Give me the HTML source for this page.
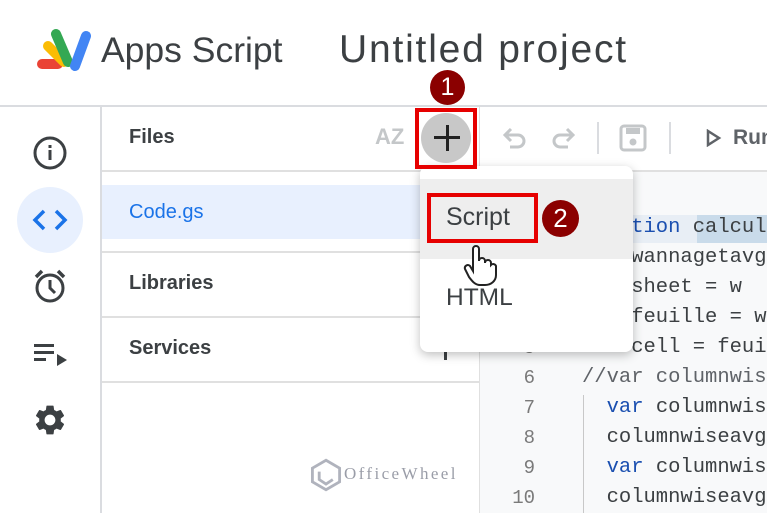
<!DOCTYPE html>
<html><head><meta charset="utf-8"><style>
*{margin:0;padding:0;box-sizing:border-box}
body{width:767px;height:513px;overflow:hidden;background:#fff;font-family:"Liberation Sans",sans-serif;position:relative;color:#3c4043}
.a{position:absolute}
.code{font-family:"Liberation Mono",monospace;font-size:20.5px;color:#3c4043;white-space:pre;line-height:30px}
.ln{font-family:"Liberation Mono",monospace;font-size:19px;color:#7a7a7a;width:40px;text-align:right;line-height:30px}
.kw{color:#1a4fb0}
.cm{color:#5f6368}
.ftxt{font-size:20px;color:#3c4043}
</style></head><body>
<svg class="a" style="left:34px;top:28px" width="58" height="46" viewBox="0 0 58 46">
<g stroke-linecap="round" stroke-width="10" fill="none">
<line x1="8" y1="36" x2="24" y2="36" stroke="#ea4335"/>
<line x1="14" y1="18" x2="30" y2="34" stroke="#fbbc04"/>
<line x1="22" y1="6" x2="34" y2="34" stroke="#34a853"/>
<line x1="52" y1="8" x2="41" y2="38" stroke="#4285f4"/>
</g></svg>
<div class="a" style="left:101px;top:30px;font-size:35.5px;color:#3c4043">Apps Script</div>
<div class="a" style="left:339px;top:28px;font-size:39px;letter-spacing:1.8px;color:#3c4043">Untitled project</div>
<div class="a" style="left:0;top:105px;width:767px;height:2px;background:#dadce0"></div>
<div class="a" style="left:100px;top:107px;width:2px;height:406px;background:#dadce0"></div>
<svg class="a" style="left:32px;top:135px" width="36" height="36" viewBox="0 0 36 36"><circle cx="18" cy="18" r="15" fill="none" stroke="#3c4043" stroke-width="3"/><rect x="16.5" y="15" width="3" height="10" fill="#3c4043"/><rect x="16.5" y="10" width="3" height="3" fill="#3c4043"/></svg>
<div class="a" style="left:17px;top:187px;width:66px;height:66px;border-radius:50%;background:#e8f0fe"></div>
<svg class="a" style="left:32px;top:208px" width="36" height="24" viewBox="0 0 36 24"><path d="M12 3 L3 12 L12 21 M24 3 L33 12 L24 21" fill="none" stroke="#1a73e8" stroke-width="3.5"/></svg>
<svg class="a" style="left:32px;top:268px" width="36" height="36" viewBox="0 0 36 36"><circle cx="18" cy="20" r="13" fill="none" stroke="#3c4043" stroke-width="3"/><path d="M18 12 V20 L23 25" fill="none" stroke="#3c4043" stroke-width="3"/><path d="M4 9 L10 3 M32 9 L26 3" stroke="#3c4043" stroke-width="3.5"/></svg>
<svg class="a" style="left:34px;top:342px" width="36" height="28" viewBox="0 0 36 28"><rect x="0" y="2" width="20" height="3" fill="#3c4043"/><rect x="0" y="9" width="20" height="3" fill="#3c4043"/><rect x="0" y="16" width="12" height="3" fill="#3c4043"/><path d="M23 12 L33 18 L23 24Z" fill="#3c4043"/></svg>
<svg class="a" style="left:32px;top:402px" width="36" height="36" viewBox="0 0 24 24"><path fill="#3c4043" d="M19.14 12.94c.04-.3.06-.61.06-.94 0-.32-.02-.64-.07-.94l2.030-1.580a.49.49 0 0 0 .12-.61l-1.920-3.320a.49.49 0 0 0-.59-.22l-2.390.96c-.5-.38-1.030-.7-1.620-.94l-.36-2.540a.48.48 0 0 0-.48-.41h-3.840c-.24 0-.43.17-.47.41l-.36 2.540c-.59.24-1.130.57-1.620.94l-2.390-.96a.49.49 0 0 0-.59.22L2.740 8.870c-.12.21-.08.47.12.61l2.030 1.580c-.05.3-.09.63-.09.94s.02.64.07.94l-2.030 1.580a.49.49 0 0 0-.12.61l1.920 3.320c.12.22.37.29.59.22l2.390-.96c.5.38 1.030.7 1.620.94l.36 2.540c.05.24.24.41.48.41h3.840c.24 0 .44-.17.47-.41l.36-2.540c.59-.24 1.130-.56 1.620-.94l2.390.96c.22.08.47 0 .59-.22l1.920-3.320c.12-.22.07-.47-.12-.61l-2.010-1.580zM12 15.6c-1.980 0-3.600-1.620-3.600-3.600s1.620-3.600 3.600-3.600 3.600 1.620 3.600 3.600-1.620 3.600-3.600 3.600z"/><circle cx="12" cy="12" r="2.6" fill="#fff"/></svg>
<div class="a ftxt" style="left:129px;top:126px;font-weight:bold;color:#3c4043">Files</div>
<div class="a" style="left:375px;top:124px;font-size:22px;font-weight:bold;color:#c4c7c9">AZ</div>
<div class="a" style="left:102px;top:170px;width:377px;height:2px;background:#e0e0e0"></div>
<div class="a" style="left:102px;top:185px;width:377px;height:54px;background:#e8f0fe"></div>
<div class="a ftxt" style="left:129px;top:201px;color:#1a73e8">Code.gs</div>
<div class="a" style="left:102px;top:251px;width:377px;height:2px;background:#e0e0e0"></div>
<div class="a ftxt" style="left:129px;top:272px;font-weight:bold">Libraries</div>
<div class="a" style="left:102px;top:316px;width:377px;height:2px;background:#e0e0e0"></div>
<div class="a ftxt" style="left:129px;top:337px;font-weight:bold">Services</div>
<div class="a" style="left:444px;top:344px;width:3px;height:16px;background:#3c4043"></div>
<div class="a" style="left:102px;top:381px;width:377px;height:2px;background:#e0e0e0"></div>
<svg class="a" style="left:310px;top:458px" width="32" height="34" viewBox="0 0 28 30"><path d="M14 2 L26 9 V21 L14 28 L2 21 V9Z M8 12 V19 L14 23 L20 19" fill="none" stroke="#b0b3bd" stroke-width="2.5"/></svg>
<div class="a" style="left:344px;top:464px;font-family:'Liberation Serif',serif;font-size:17px;letter-spacing:2.4px;color:#9a9da8">OfficeWheel</div>
<div class="a" style="left:479px;top:172px;width:288px;height:341px;background:#f8f9fa"></div>
<div class="a" style="left:479px;top:107px;width:1px;height:406px;background:#e0e0e0"></div>
<div class="a" style="left:479px;top:170px;width:288px;height:2px;background:#e0e0e0"></div>
<svg class="a" style="left:502px;top:126px" width="26" height="24" viewBox="0 0 26 24"><path d="M9 3 L3 9 L9 15 M3 9 H16 a6 6 0 0 1 0 12 H8" fill="none" stroke="#c4c7c9" stroke-width="3"/></svg>
<svg class="a" style="left:550px;top:126px" width="26" height="24" viewBox="0 0 26 24"><path d="M17 3 L23 9 L17 15 M23 9 H10 a6 6 0 0 0 0 12 H18" fill="none" stroke="#c4c7c9" stroke-width="3"/></svg>
<div class="a" style="left:597px;top:122px;width:2px;height:32px;background:#dadce0"></div>
<svg class="a" style="left:619px;top:124px" width="28" height="28" viewBox="0 0 28 28"><rect x="2" y="2" width="24" height="24" rx="3" fill="none" stroke="#c4c7c9" stroke-width="3"/><rect x="7" y="4" width="14" height="6" fill="#c4c7c9"/><circle cx="14" cy="18" r="3.5" fill="#c4c7c9"/></svg>
<div class="a" style="left:669px;top:122px;width:2px;height:32px;background:#dadce0"></div>
<svg class="a" style="left:706px;top:129px" width="16" height="18" viewBox="0 0 16 18"><path d="M2 2 L13 9 L2 16Z" fill="none" stroke="#5f6368" stroke-width="2.5"/></svg>
<div class="a" style="left:733px;top:126px;font-size:21px;font-weight:bold;color:#5f6368">Run</div>
<div class="a" style="left:495px;top:213px">
<div class="ln">1</div><div class="ln">2</div><div class="ln">3</div><div class="ln">4</div><div class="ln">5</div><div class="ln">6</div><div class="ln">7</div><div class="ln">8</div><div class="ln">9</div><div class="ln">10</div>
</div>
<div class="a" style="left:630px;top:215px;width:74px;height:28px;background:#e8eef5"></div>
<div class="a" style="left:697px;top:215px;width:70px;height:28px;background:#c9dbea"></div>
<div class="a" style="left:583px;top:395px;width:1px;height:118px;background:#c8c8c8"></div>
<div class="a code" style="left:582px;top:213px"><span class="kw">function</span> calculate
<span class="kw">var</span> wannagetavg
<span class="kw">var</span> sheet = w
<span class="kw">var</span> feuille = w
<span class="kw">var</span> cell = feui
<span class="cm">//var columnwis</span>
  <span class="kw">var</span> columnwis
  columnwiseavg
  <span class="kw">var</span> columnwis
  columnwiseavg</div>
<div class="a" style="left:420px;top:166px;width:213px;height:186px;background:#fff;border-radius:8px;box-shadow:0 3px 10px rgba(0,0,0,.25)"></div>
<div class="a" style="left:420px;top:179px;width:213px;height:80px;background:#eeeeee"></div>
<div class="a" style="left:446px;top:203px;font-size:25px;color:#3c4043">Script</div>
<div class="a" style="left:427px;top:193px;width:111px;height:50px;border:4px solid #e60000"></div>
<div class="a" style="left:446px;top:284px;font-size:24.5px;color:#3c4043">HTML</div>
<svg class="a" style="left:463px;top:245px" width="36" height="42" viewBox="0 0 36 42"><path d="M10 4 a3 3 0 0 1 6 0 V16 a3 3 0 0 1 6 0 V18 a3 3 0 0 1 6 0 V20 a3 3 0 0 1 5 1 V30 C33 36 28 40 22 40 H17 C12 40 9 36 6 32 L2 24 a3 3 0 0 1 5 -3 L10 26Z" fill="#fff" stroke="#222" stroke-width="2"/></svg>
<div class="a" style="left:542px;top:200px;width:37px;height:37px;border-radius:50%;background:#8b0000;color:#fff;font-size:26px;text-align:center;line-height:37px">2</div>
<div class="a" style="left:421px;top:113px;width:50px;height:50px;border-radius:50%;background:#c8c8c8"></div>
<div class="a" style="left:434px;top:136px;width:26px;height:3px;background:#222"></div>
<div class="a" style="left:445.5px;top:125px;width:3px;height:26px;background:#222"></div>
<div class="a" style="left:415px;top:108px;width:62px;height:61px;border:4px solid #e60000"></div>
<div class="a" style="left:430px;top:70px;width:35px;height:35px;border-radius:50%;background:#8b0000;color:#fff;font-size:25px;text-align:center;line-height:35px">1</div>
</body></html>
